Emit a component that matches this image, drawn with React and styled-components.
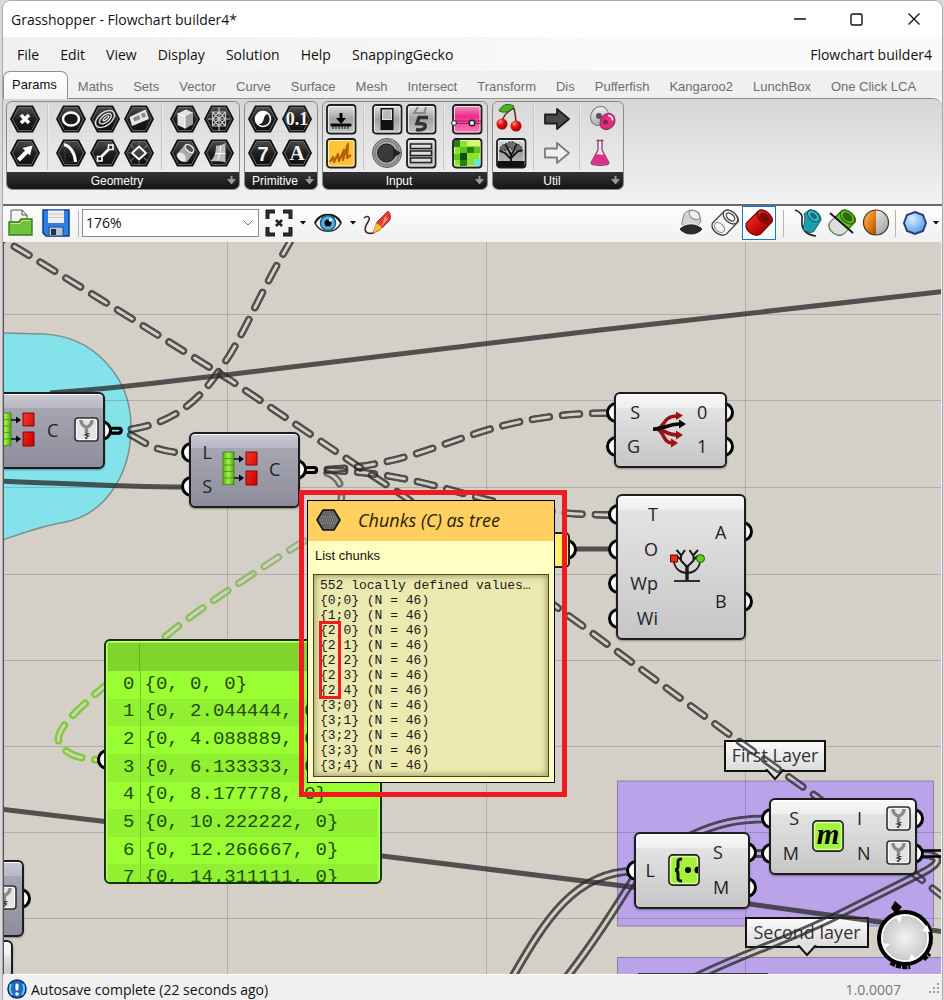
import React, { useState } from 'react';
import styled, { createGlobalStyle, css } from 'styled-components';

const ui = '"Open Sans", "Noto Sans", sans-serif';
const arial = '"Liberation Sans", Arial, sans-serif';
const mono = '"Liberation Mono", "Courier New", monospace';

const GlobalStyle = createGlobalStyle`
  * { box-sizing: border-box; }
  body { margin: 0; background: #d9d9dc; font-family: ${ui}; color: #111; }
  button { font: inherit; color: inherit; background: none; border: 0; padding: 0; }
  svg { display: block; }
`;

/* ---------- window ---------- */

const Page = styled.div`
  min-height: 100vh;
  padding: 0 1px 0 2px;
  display: flex;
`;

const Window = styled.div`
  flex: 1;
  min-width: 0;
  display: flex;
  flex-direction: column;
  background: #f0f0f0;
  border: 1px solid #a9a9ab;
  border-bottom: 0;
  border-radius: 9px 9px 0 0;
  overflow: hidden;
`;

const TitleBar = styled.header`
  height: 36px;
  padding-left: 8px;
  display: flex;
  align-items: center;
  justify-content: space-between;
  background: #fff;
`;

const Title = styled.h1`
  margin: 0;
  font-size: 14px;
  font-weight: 400;
`;

const WindowControls = styled.div`
  display: flex;

  button {
    width: 57px;
    height: 36px;
    display: grid;
    place-items: center;
  }
`;

const MenuBar = styled.nav`
  height: 34px;
  padding: 0 10px 0 14px;
  display: flex;
  align-items: center;
  gap: 21px;
  font-size: 14px;
  background: linear-gradient(90deg, #f0f0f0, #fafafa 70%);
`;

const DocumentName = styled.span`
  margin-left: auto;
`;

const Tabs = styled.nav`
  height: 28px;
  margin-bottom: -1px;
  display: flex;
  font: 13px ${arial};
  position: relative;
`;

const Tab = styled.button`
  height: 27px;
  padding: 3px 10px 0;
  color: #6e6e6e;
  white-space: nowrap;

  ${p => p.$active && css`
    height: 28px;
    padding: 0 10px 3px 8px;
    color: #111;
    background: linear-gradient(#fff, #f4f4f4);
    border: 1px solid #8f8f8f;
    border-bottom: 0;
    border-radius: 7px 7px 0 0;
  `}
`;

const Ribbon = styled.section`
  height: 106px;
  padding: 2px 3px 0;
  display: flex;
  align-items: flex-start;
  gap: 4px;
  border-top: 1px solid #8f8f8f;
  border-radius: 0 9px 0 0;
  background: linear-gradient(#d6d6d6, #f2f2f2);
`;

const Group = styled.section`
  border: 1px solid #8a8a8a;
  border-radius: 6px;
  overflow: hidden;
  background: linear-gradient(#d8d8d8, #f0f0f0);
`;

const GroupIcons = styled.div`
  display: flex;
  gap: 12px;
  padding: 0 3px 2px 1px;
`;

const IconColumn = styled.div`
  display: grid;
  grid-auto-flow: column;
  grid-template-rows: 34px 34px;
  grid-auto-columns: 34px;
  position: relative;

  & + &::before {
    content: '';
    position: absolute;
    left: -7px;
    top: 2px;
    bottom: 0;
    width: 2px;
    background: linear-gradient(90deg, #b4b4b4, #fbfbfb);
  }

  button { display: grid; place-items: center; }
`;

const GroupLabel = styled.h2`
  margin: 0;
  height: 17px;
  padding-right: 3px;
  display: flex;
  align-items: center;
  font: 12px ${arial};
  line-height: 16px;
  color: #fff;
  background: linear-gradient(#333, #151515);

  span { flex: 1; text-align: center; }
`;

const Toolbar = styled.section`
  height: 38px;
  padding: 0 2px 2px 1px;
  display: flex;
  align-items: center;
  border-top: 2px solid #6a6a6a;
  background: linear-gradient(#fcfcfc, #f1f1f1);
`;

const ToolButton = styled.button`
  width: ${p => p.$width || 34}px;
  height: 34px;
  display: grid;
  place-items: center;
  border: 1px solid ${p => (p.$on ? '#0a79d8' : 'transparent')};
  background: ${p => (p.$on ? '#fff' : 'none')};
`;

const Separator = styled.span`
  width: 1px;
  height: 27px;
  margin: 0 ${p => p.$gap || 4}px;
  background: #b5b5b5;
`;

const Spacer = styled.span`
  flex: 1;
`;

const ZoomSelect = styled.select`
  width: 177px;
  height: 28px;
  padding: 0 0 2px 3px;
  margin-right: 3px;
  appearance: none;
  font: 14px ${ui};
  color: #111;
  border: 1px solid #8c8c8c;
  border-radius: 0;
  background: #fff url("data:image/svg+xml,%3Csvg xmlns='http://www.w3.org/2000/svg' width='10' height='6'%3E%3Cpath d='M.5 .5 5 5 9.5 .5' fill='none' stroke='%23666'/%3E%3C/svg%3E") no-repeat right 5px center;
`;

const StatusBar = styled.footer`
  height: 25px;
  padding: 3px 0 0 4px;
  display: flex;
  align-items: center;
  gap: 4px;
  font-size: 14px;
  background: #f0f0f0;
`;

const Version = styled.span`
  margin-left: auto;
  margin-right: 23px;
  color: #777;
`;

/* ---------- canvas ---------- */

const Canvas = styled.main`
  flex: 1;
  min-height: 733px;
  margin-right: 1px;
  position: relative;
  overflow: hidden;
  border-left: 1px solid #555;
  border-bottom: 1px solid #fff;
  background: #d4d0c8;
`;

const Layer = styled.svg`
  position: absolute;
  inset: 0;
  width: 100%;
  height: 100%;
`;

const Placed = styled.div`
  position: absolute;
  left: ${p => p.$x}px;
  top: ${p => p.$y}px;
  width: ${p => p.$w}px;
  height: ${p => p.$h}px;
`;

const Body = styled.div`
  position: relative;
  height: 100%;
  padding: 1px 0 3px;
  display: grid;
  grid-template-columns: ${p => p.$cols};
  border: 2px solid #1c1c1c;
  border-radius: 6px;
  background: ${p => (p.$selected
    ? 'linear-gradient(#c9c9d4, #b9b9c6 14px, #a6a6b3 14px, #8d8d9b)'
    : 'linear-gradient(#f8f8f8, #eeeeee 14px, #e3e3e3 14px, #c6c6c6)')};
  box-shadow: inset 0 1px 0 #fff, 0 1px 2px rgba(0, 0, 0, 0.35);
`;

const Params = styled.div`
  display: flex;
  flex-direction: column;
  font: 18px ${ui};
  color: #222;

  > span {
    flex: 1;
    display: flex;
    align-items: center;
    justify-content: ${p => (p.$right ? 'flex-end' : 'flex-start')};
    min-height: 0;
  }
`;

const NodeIcon = styled.div`
  display: grid;
  place-items: center;
`;

const Rail = styled.div`
  position: absolute;
  top: 0;
  bottom: 0;
  padding: 3px 0 4px;
  display: flex;
  flex-direction: column;
  ${p => (p.$right ? 'right: -7px' : 'left: -8px')};

  > i {
    flex: 1;
    display: grid;
    place-items: center;
  }

  > i::before {
    content: '';
    width: 15px;
    height: 15px;
    border: 3px solid #000;
    border-radius: 50%;
    background: #fff;
  }
`;

const Scribble = styled(Placed)`
  display: grid;
  place-items: center;
  padding-bottom: 2px;
  font: 18px ${ui};
  color: #333;
  white-space: nowrap;
  border: 2px solid #111;
  background: linear-gradient(#fafafa, #dcdcdc);

  svg {
    position: absolute;
    top: 100%;
    left: 50%;
    margin-left: -11px;
    margin-top: -1px;
  }
`;

const Panel = styled(Placed)`
  border: 2px solid #14330a;
  border-radius: 6px;
  overflow: hidden;
  background: #99ff33;
  box-shadow: inset 0 0 0 1px #c4ff7c;
`;

const PanelHead = styled.div`
  height: 28px;
  padding-left: 31px;
  margin: 2px 2px 0;
  background: #80d42c;

  &::before {
    content: '';
    display: block;
    height: 100%;
    border-left: 1px solid #66ad22;
  }
`;

const PanelTable = styled.table`
  width: 269px;
  height: 221px;
  margin: 0 2px;
  border-collapse: collapse;
  font: 19px ${mono};
  color: #234d0a;

  tr:nth-child(even) { background: #91f032; }
  th, td { padding: 0 0 2px; font-weight: 400; line-height: 22px; white-space: pre; }
  th { width: 32px; padding-right: 5px; text-align: right; border-right: 1px solid #78c927; }
  td { padding-left: 4px; }
`;

const YellowStub = styled(Placed)`
  border: 2px solid #222;
  border-radius: 5px;
  background: #fff06a;
`;

const Highlight = styled(Placed)`
  padding: 5px 7px 9px 3px;
  display: flex;
  border: 5px solid #f01a22;
`;

const Tooltip = styled.article`
  flex: 1;
  display: flex;
  flex-direction: column;
  border: 1px solid #000;
  background: #ffffc2;
`;

const TooltipHead = styled.header`
  height: 40px;
  padding: 0 0 2px 8px;
  display: flex;
  align-items: center;
  gap: 17px;
  font: italic 18px ${ui};
  color: #2a2000;
  background: #ffd060;
`;

const TooltipText = styled.p`
  margin: 0;
  padding: 0 7px;
  height: 33px;
  font: 13px ${arial};
  line-height: 29px;
`;

const DataBox = styled.div`
  flex: 1;
  margin: 0 5px 5px;
  padding: 3px 0 0 6px;
  position: relative;
  border: 1px solid #4a4624;
  background: #ebe9b0;
  box-shadow: inset 0 0 6px 1px #9a9660;
  font: 13px ${mono};
  line-height: 15px;
  color: #1c1a10;
  white-space: pre;
`;

const Mark = styled.span`
  position: absolute;
  left: 5px;
  top: 46px;
  width: 22px;
  height: 78px;
  border: 3px solid #f01a22;
`;

/* ---------- shared drawing definitions ---------- */

const Defs = () => (
  <svg width="0" height="0" style={{ position: 'absolute' }} aria-hidden="true">
    <defs>
      <linearGradient id="hex" x1="0" y1="0" x2="0" y2="1">
        <stop offset="0" stopColor="#4a4a4a" />
        <stop offset=".5" stopColor="#202020" />
        <stop offset="1" stopColor="#0e0e0e" />
      </linearGradient>
      <linearGradient id="metal" x1="0" y1="0" x2="0" y2="1">
        <stop offset="0" stopColor="#e2e2e2" />
        <stop offset=".5" stopColor="#a2a2a2" />
        <stop offset="1" stopColor="#c4c4c4" />
      </linearGradient>
      <linearGradient id="silver" x1="0" y1="0" x2="1" y2="1">
        <stop offset="0" stopColor="#fff" />
        <stop offset="1" stopColor="#999" />
      </linearGradient>
      <linearGradient id="pink" x1="0" y1="0" x2="0" y2="1">
        <stop offset="0" stopColor="#e9a0bd" />
        <stop offset=".4" stopColor="#ee2b8c" />
        <stop offset="1" stopColor="#f77fb9" />
      </linearGradient>
      <linearGradient id="green" x1="0" y1="0" x2="1" y2="0">
        <stop offset="0" stopColor="#57b80f" />
        <stop offset=".5" stopColor="#a0f04a" />
        <stop offset="1" stopColor="#4fa810" />
      </linearGradient>
      <linearGradient id="redBox" x1="0" y1="0" x2="1" y2="1">
        <stop offset="0" stopColor="#f8362c" />
        <stop offset="1" stopColor="#c80000" />
      </linearGradient>
      <linearGradient id="redTube" x1="0" y1="0" x2="1" y2="1">
        <stop offset="0" stopColor="#f04030" />
        <stop offset=".5" stopColor="#d01010" />
        <stop offset="1" stopColor="#700000" />
      </linearGradient>
      <linearGradient id="orange" x1="0" y1="0" x2="1" y2="1">
        <stop offset="0" stopColor="#ffc36a" />
        <stop offset=".5" stopColor="#e88418" />
        <stop offset="1" stopColor="#a04c08" />
      </linearGradient>
      <linearGradient id="greenWire" gradientUnits="userSpaceOnUse" x1="300" y1="540" x2="100" y2="700">
        <stop offset="0" stopColor="#9ab483" />
        <stop offset="1" stopColor="#7fce33" />
      </linearGradient>
      <radialGradient id="ball" cx=".35" cy=".3" r=".8">
        <stop offset="0" stopColor="#ff9a80" />
        <stop offset=".4" stopColor="#e01010" />
        <stop offset="1" stopColor="#900" />
      </radialGradient>
      <radialGradient id="knob">
        <stop offset="0" stopColor="#f2f2f2" />
        <stop offset="1" stopColor="#c4c4c4" />
      </radialGradient>
      <radialGradient id="blue" cx=".35" cy=".3" r=".8">
        <stop offset="0" stopColor="#d8efff" />
        <stop offset="1" stopColor="#4d93e6" />
      </radialGradient>
    </defs>
  </svg>
);

/* ---------- ribbon icons ---------- */

const Hex = ({ children }) => (
  <svg width="32" height="30" viewBox="-1 0 32 30">
    <path d="M0 15 7 1.5H23L30 15 23 28.5H7Z" fill="#111" />
    <path d="M2.5 15 8.5 3.5h13L27.5 15 21.5 26.5h-13Z" fill="url(#hex)" stroke="#777" strokeWidth=".8" />
    {children}
  </svg>
);

const Tile = ({ fill = 'url(#metal)', children }) => (
  <svg width="32" height="32" viewBox="-1 -1 32 32">
    <rect x="1" y="1" width="28.5" height="28.5" rx="3" fill={fill} stroke="#1d1d1d" strokeWidth="1.8" />
    <rect x="2.5" y="2.5" width="25.5" height="25.5" rx="1.5" fill="none" stroke="#fff" strokeOpacity=".7" />
    {children}
  </svg>
);

const hexText = { fill: '#f4f4f4', textAnchor: 'middle', fontFamily: '"Liberation Serif", serif', fontWeight: 700 };

const icons = {
  point: <Hex><path d="M11 11l8 8M19 11l-8 8" stroke="#fff" strokeWidth="3.5" /></Hex>,
  vector: <Hex><path d="M8.5 22L17 13.500" stroke="#fff" strokeWidth="4" /><path d="M12.5 10L22.5 7.500 20 17.500z" fill="#fff" /></Hex>,
  circle: <Hex><ellipse cx="15" cy="15" rx="8" ry="6.5" fill="#1a1a1a" stroke="#fff" strokeWidth="2.5" /></Hex>,
  arc: <Hex><path d="M8 6.500C14 8 19 15 19.500 24" fill="none" stroke="#fff" strokeWidth="3" /><path d="M9 12v12h8" fill="none" stroke="#444" strokeDasharray="2 1" /></Hex>,
  curve: (
    <Hex>
      <g transform="rotate(-38 15 15)" fill="none" stroke="#ddd" strokeWidth="1.4">
        <ellipse cx="15" cy="15" rx="11" ry="6.5" />
        <ellipse cx="15.5" cy="15" rx="7" ry="3.6" />
        <ellipse cx="16" cy="15" rx="3.5" ry="1.2" />
      </g>
    </Hex>
  ),
  line: <Hex><path d="M10 20L20 10" stroke="#fff" strokeWidth="2.6" /><path d="M7.500 18.500h4.500v4.500H7.500zM18.500 7h4.500v4.500h-4.500z" fill="#222" stroke="#fff" strokeWidth="1.6" /></Hex>,
  plane: <Hex><path d="M5.500 13l16-7.500L25 15 8 22z" fill="#e6e6e6" /><path d="M9 14l6-3 1.500 4-6 2.500zM17 10l3.500-1.500 1.500 4-3.500 1.500z" fill="#888" /></Hex>,
  rectangle: <Hex><path d="M15 8.500l7 6.500-7 6.500L8 15z" fill="#444" stroke="#fff" strokeWidth="2" /><path d="M6.500 7l17 16M23.500 7L6.500 23" stroke="#999" strokeWidth="1" strokeDasharray="5 13" /><path d="M4 15h4M22 15h4M15 4v4M15 22v4" stroke="#666" /></Hex>,
  box: <Hex><path d="M7.500 9.500l8.500-4 7 3V20l-8 4.500-7.500-3.500z" fill="#e2e2e2" /><path d="M15 12.500l8-4V20l-8 4.500z" fill="#a2a2a2" /><path d="M7.500 9.500l7.500 3v12" stroke="#fff" fill="none" /></Hex>,
  brep: <Hex><path d="M6.500 16.500L15 6.500c5-2 10 3 9 8L17 24c-5 1-10-3-10.500-7.500z" fill="#a8a8a8" /><ellipse cx="11.5" cy="19" rx="3.6" ry="5.200" transform="rotate(-42 11.500 19)" fill="#e6e6e6" /><ellipse cx="19.5" cy="10.500" rx="5" ry="3" transform="rotate(42 19.500 10.500)" fill="#555" stroke="#eee" strokeWidth="1.300" /></Hex>,
  mesh: <Hex><path d="M8.500 8h13v14h-13zM15 3.500v23M4 15h22M8.500 8l13 14M21.500 8l-13 14M15 8l6.500 7-6.500 7-6.500-7z" fill="none" stroke="#c4c4c4" strokeWidth="1.2" /></Hex>,
  surface: <Hex><path d="M12 7.500c3 .5 6-.5 9.500-2.500v19.500c-5-2-10-1-15-1.500C11 19 12 14 12 7.500z" fill="#bdbdbd" /><path d="M16.500 7.500c0 6-1 11-3 15M11 15.500h10.500" stroke="#fff" fill="none" /></Hex>,
  boolean: <Hex><circle cx="15" cy="15" r="7.5" fill="#fff" /><path d="M20.300 9.700A7.5 7.5 0 0 1 9.700 20.300c5 0 5-3 6-5s0-4 4.600-5.600z" fill="#222" /><circle cx="15" cy="15" r="7.5" fill="none" stroke="#fff" strokeWidth="1.6" /></Hex>,
  integer: <Hex><text x="15" y="22.5" fontSize="20" {...hexText} fontFamily="Liberation Sans">7</text></Hex>,
  number: <Hex><text x="15" y="21" fontSize="18" {...hexText}>0.1</text></Hex>,
  text: <Hex><text x="15" y="22" fontSize="21" {...hexText}>A</text></Hex>,
  button: <Tile><path d="M15 9v7" stroke="#000" strokeWidth="3" /><path d="M10 14h10l-5 6z" /><path d="M5 20h20v2H5zM7 22v3M10 22v3M13 22v3M16 22v3M19 22v3M22 22v3" stroke="#111" /></Tile>,
  gene: <Tile fill="#fdc536"><path d="M4 24l3-5 1 5 4-8 1 7 5-11-1 10 5-16-1 14 4-3" fill="none" stroke="#b3600c" strokeWidth="2.200" strokeLinejoin="round" /></Tile>,
  slider: <Tile><rect x="9" y="4.5" width="12" height="21" fill="#111" stroke="#111" /><rect x="10.5" y="6" width="9" height="9.5" fill="#b9b9b9" stroke="#e4e4e4" /></Tile>,
  knob: <svg width="32" height="32" viewBox="-1 -1 32 32"><circle cx="15" cy="15" r="14.5" fill="#a8a8a8" stroke="#555" /><circle cx="15" cy="15" r="12" fill="none" stroke="#7c7c7c" strokeWidth="1.5" /><circle cx="14.5" cy="15" r="9" fill="#3a3a3a" stroke="#1a1a1a" /><path d="M29 15l-8-5v10z" fill="#222" /></svg>,
  counter: <Tile><path d="M20 3l-2 7M12 3l-4 6h12" stroke="#888" strokeWidth="2" fill="none" /><path d="M22 13.500h-9l-2 6c6 0 9 0 8 4-1 2-5 3-9 2" fill="none" stroke="#333" strokeWidth="3.5" /></Tile>,
  list: <Tile><path d="M4.500 6h21v4.500h-21zM4.500 13h21v4.500h-21zM4.500 20h21v4.500h-21z" fill="#ddd" stroke="#222" strokeWidth="1.5" /></Tile>,
  gradient: <Tile fill="url(#pink)"><path d="M1 17h28M1 19.500h28" stroke="#8a1650" strokeWidth=".8" /><circle cx="2" cy="19" r="2.4" fill="#fff" stroke="#222" /><circle cx="20" cy="19" r="2.8" fill="#fff" stroke="#222" strokeWidth="1.5" /></Tile>,
  image: (
    <Tile fill="#8be32a">
      <path d="M2 2h6v7H2zM15 9h7v6h-7zM8 21h7v7H8z" fill="#2f7d10" />
      <path d="M2 16h6v6H2zM8 9h7v6H8zM22 9h6v6h-6z" fill="#5cc41e" />
      <path d="M8 15h7v7H8z" fill="#0d4d0d" /><path d="M15 2h13v6H15z" fill="#d8f27a" /><path d="M22 21h6v7h-6z" fill="#6fe3df" />
    </Tile>
  ),
  cherry: (
    <svg width="30" height="32" viewBox="2 1 30 32">
      <path d="M20 6C14 9 9 14 8 20M20 6c1 5 2 10 2 16" fill="none" stroke="#5b3020" strokeWidth="1.5" />
      <path d="M5 9C8 2 14 1 20 4c-3 5-9 8-15 5z" fill="#4fb02a" stroke="#2c6b14" />
      <circle cx="8" cy="22" r="5.5" fill="url(#ball)" /><circle cx="22" cy="24" r="5.5" fill="url(#ball)" />
    </svg>
  ),
  tree: <Tile><rect x="2" y="23" width="26.5" height="6" fill="#111" /><path d="M15 27V17M15 21l-6-6M15 20l6-6M15 17l-3-6M15 17l4-6M9 15l-5-2M21 14l5-2M12 11L9 6M18 11l3-5" stroke="#111" strokeWidth="1.8" /><path d="M4 14c-1-5 3-8 6-8 3-3 8-3 10 0 4 0 7 4 6 8l-5-1-2-3-3 2-3-3-3 4-2-1z" fill="#222" fillOpacity=".55" stroke="#222" strokeDasharray="2 1.500" /></Tile>,
  jump: <svg width="30" height="30" viewBox="0 0 30 30"><path d="M3 10.500h12V5l12 10-12 10v-5.500H3z" fill="#4a4a4a" stroke="#1d1d1d" strokeWidth="1.8" strokeLinejoin="round" /></svg>,
  relay: <svg width="30" height="30" viewBox="0 0 30 30"><path d="M3 10.500h12V5l12 10-12 10v-5.500H3z" fill="#f0f0f0" stroke="#7c7c7c" strokeWidth="1.8" strokeLinejoin="round" /></svg>,
  pill: (
    <svg width="30" height="32" viewBox="0 0 30 32">
      <ellipse cx="11.5" cy="13" rx="8.500" ry="10" transform="rotate(35 11.500 13)" fill="url(#silver)" stroke="#777" />
      <circle cx="11" cy="13" r="3" fill="#555" />
      <ellipse cx="19.500" cy="18.500" rx="7" ry="8.500" transform="rotate(35 19.500 18.500)" fill="#e02f80" stroke="#8d1c55" />
      <circle cx="17.500" cy="19" r="2.500" fill="#8d1c55" /><path d="M20 12.500c3 0 4.500 2 4.500 5" stroke="#ffd3e8" strokeWidth="2" fill="none" />
    </svg>
  ),
  flask: (
    <svg width="30" height="32" viewBox="1 0 30 32">
      <path d="M9.500 3.500h7M11 4v9L4 26c0 3 18 3 18 0l-7-13V4" fill="#f6e4ee" stroke="#7a4a62" strokeWidth="1.300" />
      <path d="M8 18l-3.500 8c0 2.500 17 2.500 17 0L18 17c-4 2-7-1-10 1z" fill="#e02f86" />
    </svg>
  ),
};

const ribbonGroups = [
  { name: 'Geometry', columns: [['point', 'vector'], ['circle', 'arc', 'curve', 'line', 'plane', 'rectangle'], ['box', 'brep', 'mesh', 'surface']] },
  { name: 'Primitive', columns: [['boolean', 'integer', 'number', 'text']] },
  { name: 'Input', columns: [['button', 'gene'], ['slider', 'knob', 'counter', 'list'], ['gradient', 'image']] },
  { name: 'Util', columns: [['cherry', 'tree'], ['jump', 'relay'], ['pill', 'flask']] },
];

const tabNames = ['Params', 'Maths', 'Sets', 'Vector', 'Curve', 'Surface', 'Mesh', 'Intersect', 'Transform', 'Dis', 'Pufferfish', 'Kangaroo2', 'LunchBox', 'One Click LCA'];
const menuNames = ['File', 'Edit', 'View', 'Display', 'Solution', 'Help', 'SnappingGecko'];

/* ---------- toolbar icons ---------- */

const Tool = ({ children }) => <svg width="30" height="30" viewBox="0 0 30 30">{children}</svg>;

const Tube = ({ fill, stroke, inner }) => (
  <g stroke={stroke} strokeWidth="1.300">
    <path d="M2.500 15 14 3.500C19-1 30 8 28 14L16.500 26C10 30 0 22 2.500 15z" fill={fill} />
    <ellipse cx="20.500" cy="9" rx="8.500" ry="5.500" transform="rotate(42 20.500 9)" fill={fill} />
    <ellipse cx="20.500" cy="9" rx="5" ry="3" transform="rotate(42 20.500 9)" fill={inner} />
  </g>
);

const tools = {
  open: <Tool><path d="M5 2h11l5 5v12H5z" fill="#f4f4f4" stroke="#555" /><path d="M16 2v5h5" fill="none" stroke="#555" /><path d="M3 14h10l2-3h11v16H3z" fill="#6fc23a" stroke="#3c7d18" strokeWidth="1.400" /><path d="M4.500 15.500H14l2-3h8.500" stroke="#b8ec8c" fill="none" /></Tool>,
  save: <Tool><path d="M2 2h26v26H5l-3-3z" fill="#2d7fe6" stroke="#0d3f8f" strokeWidth="1.500" /><path d="M7 2.500h16V15H7z" fill="#eee" /><path d="M7 6h16M7 9.500h16" stroke="#ccc" /><path d="M8 19h14v9H8z" fill="#b8c4d4" stroke="#1d4a8c" /><path d="M10 21h5v6h-5z" fill="#234" /></Tool>,
  zoom: <Tool><path d="M3.500 11V3.500H11M19 3.500h7.500V11M26.500 19v7.500H19M11 26.500H3.500V19" fill="none" stroke="#1c1c1c" strokeWidth="4" /><path d="M3.500 11V3.500H11M19 3.500h7.500V11M26.500 19v7.500H19M11 26.500H3.500V19" fill="none" stroke="#444" strokeWidth=".7" /><path d="M12 12l6 6M18 12l-6 6" stroke="#222" strokeWidth="2.600" /></Tool>,
  eye: <Tool><path d="M2 15C7 4 23 4 28 15 23 26 7 26 2 15z" fill="#eef4f6" stroke="#333" strokeWidth="1.600" /><path d="M2 15C7 4 23 4 28 15" fill="none" stroke="#111" strokeWidth="1.800" /><circle cx="15" cy="15" r="7.500" fill="#4bb3e0" stroke="#1c5c85" strokeWidth="1.500" /><circle cx="15" cy="15" r="3.500" /><circle cx="17.500" cy="12" r="1.800" fill="#fff" /></Tool>,
  pen: <Tool><path d="M2 10c4-3 7-1 4 4-4 6-5 13 6 11" fill="none" stroke="#4a2a20" strokeWidth="1.600" /><path d="M11 25l4-11L26 3c2 2 3 5 2 9L18 22z" fill="#e8392f" stroke="#8f1712" strokeWidth=".8" /><path d="M11 25l3-10 5 3 1 3z" fill="#eec03a" /><path d="M23 8l3 3-7 8z" fill="#ff8a80" /></Tool>,
  noPreview: <Tool><path d="M6 14 8 6c4-5 10-5 15-1l2 8-4 6-15-2z" fill="#d2d2d2" stroke="#888" /><ellipse cx="18.500" cy="7" rx="6" ry="4" transform="rotate(35 18.500 7)" fill="#eee" stroke="#888" /><path d="M3 21c6-7 18-7 24 0-6 8-18 8-24 0z" fill="#2b2b2b" stroke="#fff" /></Tool>,
  wire: <Tool><Tube fill="#f5f5f5" stroke="#444" inner="#fff" /><ellipse cx="9.500" cy="19.500" rx="6" ry="4" transform="rotate(42 9.500 19.500)" fill="none" stroke="#888" /></Tool>,
  shaded: <Tool><Tube fill="url(#redTube)" stroke="#7d0707" inner="#7d0707" /></Tool>,
  selected: <Tool><path d="M2 2c6 2 8 6 7 11-1 8 4 14 14 15" fill="none" stroke="#222" strokeWidth="1.600" /><path d="M11 6l5-4c6-1 12 4 12 10l-7 11c-3 3-8 1-11-2 1-6 3-10 1-15z" fill="#1d9db0" stroke="#0d5c68" /><ellipse cx="20.500" cy="8" rx="7" ry="4.500" transform="rotate(42 20.500 8)" fill="#3cbccc" stroke="#0d5c68" /><ellipse cx="20.500" cy="8" rx="4" ry="2.400" transform="rotate(42 20.500 8)" fill="#15707e" /></Tool>,
  clip: <Tool><Tube fill="#5fc21c" stroke="#2c6b0a" inner="#2c6b0a" /><path d="M2.500 15l5-5.500L22 21l-5.500 5C10 30 0 22 2.500 15z" fill="#ddd" stroke="#777" /><path d="M3 5l23 20" stroke="#111" strokeWidth="1.800" /></Tool>,
  sphere: <Tool><circle cx="15" cy="14.500" r="12.500" fill="url(#silver)" /><path d="M15 2a12.500 12.500 0 0 0 0 25z" fill="url(#orange)" /><circle cx="15" cy="14.500" r="12.500" fill="none" stroke="#4d3218" strokeWidth="1.200" /></Tool>,
  poly: <Tool><path d="M15 4l8 3 3 8-3 8-8 3-8-3-3-8 3-8z" fill="url(#blue)" stroke="#27407c" strokeWidth="2" /></Tool>,
};

const Caret = () => <svg width="6" height="4" viewBox="0 0 6 4"><path d="M0 0h6L3 3.5z" /></svg>;

/* ---------- node icons ---------- */

const ChunkIcon = () => (
  <svg width="38" height="38" viewBox="0 0 38 38">
    <path d="M1 2h11v33l-3-1-3 1-3-1-2 1z" fill="url(#green)" stroke="#3f8f10" />
    <path d="M2 8.500h9M2 15h9M2 21.500h9M2 28h9" stroke="#3f8f10" strokeWidth=".8" />
    <path d="M12 9h6M12 28h6" stroke="#111" strokeWidth="1.600" />
    <path d="M17 5.500L22 9l-5 3.500zM17 24.500l5 3.500-5 3.500z" />
    <path d="M24 2h11v13H24zM24 21h11v14H24z" fill="url(#redBox)" stroke="#8d0000" />
  </svg>
);

const GraftIcon = () => (
  <svg width="25" height="25" viewBox="0 0 25 25">
    <rect x="1" y="1" width="23" height="23" rx="3" fill="#e4e4e4" stroke="#333" strokeWidth="1.600" />
    <rect x="2.500" y="2.500" width="20" height="20" rx="2" fill="none" stroke="#fafafa" />
    <path d="M7 3c0 4 2 6 5.500 7.500M18 3c0 4-2 6-5.500 7.500M12.500 9v6" fill="none" stroke="#8a8a8a" strokeWidth="3.400" />
    <path d="M11 15.500l3.500 1-3.500 1.500 3.500 1-3 2 1.500 1" fill="none" stroke="#333" strokeWidth="1.200" />
  </svg>
);

const ForkIcon = () => (
  <svg width="36" height="38" viewBox="0 0 36 38">
    <g fill="none" stroke="#9c1212" strokeWidth="3.600">
      <path d="M6 19C14 17 12 6 26 6" /><path d="M6 19c8 0 8 6 20 6" /><path d="M6 19c7 2 6 14 15 14" />
    </g>
    <path d="M25 1.500l7 4-7 4.500zM25 20.500l7 4.500-7 4.500zM20 28.500l7 4.500-7 4.500z" fill="#9c1212" />
    <path d="M2 19c10 1 14-5 26-5" fill="none" stroke="#080808" strokeWidth="3.600" />
    <path d="M28 9.500l7 4.500-7 4.500z" fill="#080808" />
  </svg>
);

const TreeIcon = () => (
  <svg width="38" height="38" viewBox="0 0 38 38">
    <g fill="none" stroke="#1b1b1b">
      <path d="M19 33V18" strokeWidth="3.400" />
      <path d="M19 20L13 13.500V8L8.500 3M13 9l4-6M19 20l6.500-6.500V8L30 3M25.500 9l-4-6M13 13L9 9M25.500 13l4-4" strokeWidth="2" />
      <path d="M6 14c1 16 25 16 26 0" strokeWidth="1.800" />
      <path d="M6 34h26" strokeWidth="1.800" />
    </g>
    <path d="M2.500 8h7v7h-7z" fill="#f02a18" stroke="#5d0c06" /><circle cx="32.500" cy="11.500" r="4" fill="#5fd01c" stroke="#235c06" />
  </svg>
);

const GreenTile = ({ children }) => (
  <svg width="34" height="34" viewBox="0 0 34 34">
    <rect x="2" y="2" width="30" height="30" rx="4" fill="#a4f23e" stroke="#222" strokeWidth="1.800" />
    <rect x="3.500" y="3.500" width="27" height="27" rx="3" fill="none" stroke="#d8ff9c" strokeWidth="1.500" />
    {children}
  </svg>
);

const BraceIcon = () => (
  <GreenTile>
    <path d="M15 6c-4 0-4 1-4 4v3c0 3-1 4-3 4 2 0 3 1 3 4v3c0 3 0 4 4 4" fill="none" stroke="#111" strokeWidth="3" />
    <circle cx="21" cy="17" r="3" /><path d="M31 13.500a3.500 3.500 0 0 0 0 7z" />
  </GreenTile>
);

const MassIcon = () => (
  <GreenTile>
    <text x="17" y="25" textAnchor="middle" fontSize="29" fontWeight="700" fontStyle="italic" fontFamily="Liberation Serif">m</text>
  </GreenTile>
);

/* ---------- nodes ---------- */

const Node = ({ x, y, w, h, cols, inputs = [], outputs = [], icon, grafts, selected }) => (
  <Placed $x={x} $y={y} $w={w} $h={h}>
    {inputs.length > 0 && <Rail>{inputs.map(n => <i key={n} />)}</Rail>}
    {outputs.length > 0 && <Rail $right>{outputs.map(n => <i key={n} />)}</Rail>}
    <Body $cols={cols} $selected={selected}>
      <Params $right>{inputs.map(n => <span key={n}>{n}</span>)}</Params>
      <NodeIcon>{icon}</NodeIcon>
      <Params>{outputs.map(n => <span key={n}>{n}</span>)}</Params>
      {grafts && <Params>{outputs.map(n => <span key={n}><GraftIcon /></span>)}</Params>}
    </Body>
  </Placed>
);

const HollowWire = ({ id, d, dashed, width = 8, hole = 2.8, stroke = '#2c2c2c', opacity = 0.78, offset = 0 }) => {
  const line = { d, fill: 'none', strokeLinecap: 'round', strokeDasharray: dashed ? '17 13.3' : undefined, strokeDashoffset: offset };
  return (
    <>
      <mask id={id} maskUnits="userSpaceOnUse" x="0" y="0" width="2000" height="2000">
        <path {...line} stroke="#fff" strokeWidth={width} />
        <path {...line} stroke="#000" strokeWidth={hole} />
      </mask>
      <path {...line} stroke={stroke} strokeWidth={width} strokeOpacity={opacity} mask={`url(#${id})`} />
    </>
  );
};

const SolidWire = ({ d }) => <path d={d} fill="none" stroke="#2c2c2c" strokeOpacity=".78" strokeWidth="5" />;

const gridX = [227.5, 486.5, 745.5];
const gridY = [314.5, 400.5, 487.5, 574.5, 660.5, 746.5, 832.5, 918.5];

const Backdrop = () => (
  <Layer>
    <g transform="translate(-4 -242)">
      <path d="M0 333 42 334C92 335 131 376 131 427 131 480 100 518 60 523 42 526 25 532 0 541Z" fill="#83e2ea" stroke="#7c8f90" strokeWidth="1.5" />
      <g fill="#baa3e8" stroke="#8c80a6">
        <rect x="617.5" y="781" width="316" height="145" />
        <rect x="617.5" y="957.5" width="340" height="60" />
      </g>
      <g stroke="#000" strokeOpacity=".16">
        {gridX.map(x => <path key={x} d={`M${x} 0V1600`} />)}
        {gridY.map(y => <path key={y} d={`M0 ${y}H2000`} />)}
      </g>
      <path d="M638 974h130" stroke="#333" strokeWidth="2" />
    </g>
  </Layer>
);

const Wires = () => (
  <Layer>
    <g transform="translate(-4 -242)">
      <SolidWire d="M50 393C120 388 160 382 217 376L600 330 944 291.500" />
      <SolidWire d="M0 481C60 483 110 487 188 487" />
      <SolidWire d="M0 809 105 821.500 382 856 632 887 750 904 880 922 944 932" />
      <SolidWire d="M572 549H614" />
      <HollowWire id="w1" dashed d="M-10 232 22 251 100 299 230 380 353 463 405 497 580 624 726 732 817 797 918 877 950 902" offset={2} />
      <HollowWire id="w2" dashed d="M113 431C185 428 210 385 231 353 250 320 262 290 290 242" offset={12} />
      <HollowWire id="w3" dashed d="M113 431C140 431 140 452 187 453" offset={12} />
      <HollowWire id="w4" dashed d="M306 470C440 470 460 413 613 413" offset={9} />
      <HollowWire id="w5" dashed d="M306 470C450 470 470 515 615 515" offset={9} />
      <HollowWire id="w6" dashed d="M306 470C350 470 344 496 336 520" offset={9} opacity={0.6} />
      <HollowWire id="w7" dashed d="M304 541C250 575 190 615 165 637L100 690C60 725 55 735 60 745 68 756 85 760 103 760" stroke="url(#greenWire)" opacity={1} />
      <HollowWire id="w8" d="M512 978C545 920 575 872 634 871" width={9} hole={3} />
      <HollowWire id="w9" d="M566 978C600 935 620 900 638 872" width={9} hole={3} />
      <HollowWire id="w10" d="M690 836C720 822 740 819 768 819" width={9} hole={3} />
      <path d="M752 853.5h12" stroke="#2c2c2c" strokeWidth="9" strokeOpacity=".8" />
      <path d="M752 853.5h12" stroke="#baa3e8" strokeWidth="3" />
      <HollowWire id="w12" d="M922 854C945 856 940 864 920 874L830 919C780 943 740 955 690 980" width={9} hole={3} />
      <path d="M918 850.5H950M918 856.5H950" stroke="#000" strokeWidth="2.500" />
      <HollowWire id="w14" d="M112 430.500h7M306 470h8" width={8} hole={2} stroke="#000" opacity={1} />
    </g>
  </Layer>
);

const Compass = () => (
  <Layer>
    <g transform="translate(901 696)">
      <path d="M-14 24a28 28 0 0 0 19 4M18 21l6-6" fill="none" stroke="#000" strokeWidth="6" strokeDasharray="5 1" />
      <circle r="26" fill="url(#knob)" stroke="#000" strokeWidth="4" />
      <circle r="23" fill="none" stroke="#fff" strokeWidth="1.5" />
      <path d="M-10 -37l7 6-6 7-5-6zM-12 -28h6l-2 6z" />
      <path d="M-10 -22l7-1-2 8zM25 -6l-8-1 5-6zM-23 5l8 1-6 6zM4 24l2-8 6 5z" fill="#fff" />
    </g>
  </Layer>
);

const Note = ({ children, ...place }) => (
  <Scribble {...place}>
    {children}
    <svg width="22" height="12" viewBox="0 0 22 12"><path d="M2 0l9 10 9-10" fill="#e0e0e0" stroke="#111" strokeWidth="2" /></svg>
  </Scribble>
);

const points = ['{0, 0, 0}', '{0, 2.044444, 0}', '{0, 4.088889, 0}', '{0, 6.133333, 0}', '{0, 8.177778, 0}', '{0, 10.222222, 0}', '{0, 12.266667, 0}', '{0, 14.311111, 0}'];
const branches = ['0;0', '1;0', '2;0', '2;1', '2;2', '2;3', '2;4', '3;0', '3;1', '3;2', '3;3', '3;4'];

const Workspace = () => (
  <Canvas>
    <Backdrop />
    <Note $x={720} $y={498} $w={102} $h={32}>First Layer</Note>
    <Note $x={741} $y={675} $w={124} $h={31}>Second layer</Note>
    <Wires />

    <Node x={-34} y={150} w={135} h={77} selected cols="17px 1fr 27px 29px" outputs={['C']} icon={<ChunkIcon />} grafts />
    <Node x={185} y={190} w={111} h={76} selected cols="21px 1fr 29px" inputs={['L', 'S']} outputs={['C']} icon={<ChunkIcon />} />
    <Node x={-60} y={618} w={80} h={77} selected cols="0 0 46px 1fr" outputs={[' ']} grafts />
    <Placed $x={-20} $y={698} $w={29} $h={38}><Body $cols="1fr" /></Placed>
    <Node x={610} y={150} w={113} h={76} cols="24px 1fr 28px" inputs={['S', 'G']} outputs={['0', '1']} icon={<ForkIcon />} />
    <Node x={612} y={252} w={130} h={146} cols="40px 1fr 29px" inputs={['T', 'O', 'Wp', 'Wi']} outputs={['A', 'B']} icon={<TreeIcon />} />
    <Node x={630} y={590} w={116} h={77} cols="19px 1fr 35px" inputs={['L']} outputs={['S', 'M']} icon={<BraceIcon />} />
    <Node x={765} y={556} w={148} h={77} cols="28px 1fr 29px 29px" inputs={['S', 'M']} outputs={['I', 'N']} icon={<MassIcon />} grafts />

    <Placed $x={101} $y={397} $w={20} $h={242}><Rail><i /></Rail></Placed>
    <Panel $x={100} $y={397} $w={278} $h={245}>
      <PanelHead />
      <PanelTable>
        <tbody>
          {points.map((p, i) => <tr key={p}><th scope="row">{i}</th><td>{p}</td></tr>)}
        </tbody>
      </PanelTable>
    </Panel>

    <Placed $x={540} $y={290} $w={26} $h={36}><Rail $right><i /></Rail></Placed>
    <YellowStub $x={540} $y={290} $w={26} $h={36} />

    <Highlight $x={295} $y={248} $w={268} $h={307}>
      <Tooltip>
        <TooltipHead>
          <svg width="25" height="22" viewBox="0 0 25 22">
            <path d="M1 11 7 1h11l6 10-6 10H7z" fill="#666" stroke="#111" strokeWidth="1.6" />
            <path d="M5 8h15M4 11h17M5 14h15" stroke="#999" strokeDasharray="1 1" />
          </svg>
          Chunks (C) as tree
        </TooltipHead>
        <TooltipText>List chunks</TooltipText>
        <DataBox>
          <div>552 locally defined values…</div>
          {branches.map(b => <div key={b}>{`{${b}} (N = 46)`}</div>)}
          <Mark />
        </DataBox>
      </Tooltip>
    </Highlight>
    <Compass />
  </Canvas>
);

export default function App() {
  const [tab, setTab] = useState('Params');

  return (
    <>
      <GlobalStyle />
      <Defs />
      <Page>
        <Window>
          <TitleBar>
            <Title>Grasshopper - Flowchart builder4*</Title>
            <WindowControls>
              <button type="button" aria-label="Minimize"><svg width="12" height="12"><path d="M0 6h12" stroke="#111" strokeWidth="1.3" /></svg></button>
              <button type="button" aria-label="Maximize"><svg width="13" height="13"><rect x="1" y="1" width="11" height="11" rx="1.5" fill="none" stroke="#111" strokeWidth="1.4" /></svg></button>
              <button type="button" aria-label="Close"><svg width="12" height="12"><path d="M.5 .5l11 11M11.5 .5l-11 11" stroke="#111" strokeWidth="1.3" /></svg></button>
            </WindowControls>
          </TitleBar>

          <MenuBar>
            {menuNames.map(m => <button type="button" key={m}>{m}</button>)}
            <DocumentName>Flowchart builder4</DocumentName>
          </MenuBar>

          <Tabs>
            {tabNames.map(t => <Tab type="button" key={t} $active={t === tab} onClick={() => setTab(t)}>{t}</Tab>)}
          </Tabs>

          <Ribbon>
            {ribbonGroups.map(g => (
              <Group key={g.name}>
                <GroupIcons>
                  {g.columns.map(col => (
                    <IconColumn key={col[0]}>
                      {col.map(n => <button type="button" key={n} aria-label={n}>{icons[n]}</button>)}
                    </IconColumn>
                  ))}
                </GroupIcons>
                <GroupLabel>
                  <span>{g.name}</span>
                  <svg width="9" height="9" viewBox="0 0 9 9"><path d="M3.500 0h2v3H9L4.500 8.500 0 3h3.500z" fill="#9a9a9a" /></svg>
                </GroupLabel>
              </Group>
            ))}
          </Ribbon>

          <Toolbar>
            <ToolButton type="button" aria-label="Open" $width={33}>{tools.open}</ToolButton>
            <ToolButton type="button" aria-label="Save" $width={38}>{tools.save}</ToolButton>
            <Separator $gap={3} />
            <ZoomSelect aria-label="Zoom" defaultValue="176">
              <option value="100">100%</option>
              <option value="176">176%</option>
            </ZoomSelect>
            <ToolButton type="button" aria-label="Zoom extents">{tools.zoom}</ToolButton>
            <ToolButton type="button" aria-label="Zoom options" $width={14}><Caret /></ToolButton>
            <ToolButton type="button" aria-label="Named views" $width={36}>{tools.eye}</ToolButton>
            <ToolButton type="button" aria-label="View options" $width={14}><Caret /></ToolButton>
            <ToolButton type="button" aria-label="Sketch">{tools.pen}</ToolButton>
            <Spacer />
            <ToolButton type="button" aria-label="No preview">{tools.noPreview}</ToolButton>
            <ToolButton type="button" aria-label="Wireframe preview">{tools.wire}</ToolButton>
            <ToolButton type="button" aria-label="Shaded preview" $on>{tools.shaded}</ToolButton>
            <Separator $gap={7} />
            <ToolButton type="button" aria-label="Preview selected">{tools.selected}</ToolButton>
            <ToolButton type="button" aria-label="Document preview">{tools.clip}</ToolButton>
            <ToolButton type="button" aria-label="Preview colours">{tools.sphere}</ToolButton>
            <Separator $gap={2} />
            <ToolButton type="button" aria-label="Mesh quality">{tools.poly}</ToolButton>
            <ToolButton type="button" aria-label="Mesh options" $width={8}><Caret /></ToolButton>
          </Toolbar>

          <Workspace />

          <StatusBar>
            <svg width="20" height="20" viewBox="0 0 20 20">
              <circle cx="10" cy="10" r="9" fill="#1b6fc4" stroke="#0b2c66" strokeWidth="1.5" />
              <path d="M4 5c-2 4-1 8 1 11M16 5c2 4 1 8-1 11" stroke="#5cd0f0" strokeWidth="2" fill="none" />
              <rect x="8" y="4" width="4" height="8" rx="2" fill="#fff" stroke="#0b2c66" strokeWidth=".6" /><circle cx="10" cy="15" r="1.8" fill="#fff" />
            </svg>
            Autosave complete (22 seconds ago)
            <Version>1.0.0007</Version>
            <svg width="14" height="14" viewBox="0 0 14 14">
              <path d="M9 1h2v2H9zM5 5h2v2H5zM9 5h2v2H9zM1 9h2v2H1zM5 9h2v2H5zM9 9h2v2H9z" fill="#a0a0a0" />
            </svg>
          </StatusBar>
        </Window>
      </Page>
    </>
  );
}
